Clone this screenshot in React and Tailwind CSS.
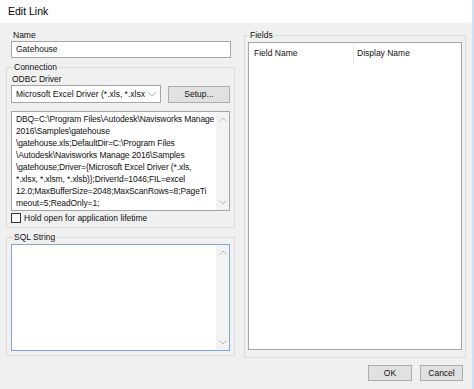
const connText = [
  'DBQ=C:\\Program Files\\Autodesk\\Navisworks Manage',
  '2016\\Samples\\gatehouse',
  '\\gatehouse.xls;DefaultDir=C:\\Program Files',
  '\\Autodesk\\Navisworks Manage 2016\\Samples',
  '\\gatehouse;Driver={Microsoft Excel Driver (*.xls,',
  '*.xlsx, *.xlsm, *.xlsb)};DriverId=1046;FIL=excel',
  '12.0;MaxBufferSize=2048;MaxScanRows=8;PageTi',
  'meout=5;ReadOnly=1;',
];

const Chevron = ({ up }) => (
  <svg width="8" height="5" viewBox="0 0 8 5" className="text-[#b8b8b8]">
    <path d={up ? 'M0.5 4.5 L4 1 L7.5 4.5' : 'M0.5 0.5 L4 4 L7.5 0.5'} fill="none" stroke="currentColor" strokeWidth="1" />
  </svg>
);

const ScrollBar = () => (
  <div className="w-[13px] bg-[#f3f3f3] flex flex-col items-center justify-between py-[5px]">
    <Chevron up />
    <Chevron />
  </div>
);

export default function App() {
  return (
    <div className="w-[474px] h-[389px] bg-[#f0f0f0] flex flex-col border-r-2 border-[#cfe2f5] font-['Liberation_Sans',Arial,sans-serif] text-[8.5px] text-[#111] overflow-hidden">
      {/* title bar */}
      <div className="h-[23px] bg-white pl-[8px] flex items-center text-[10.5px] text-black">Edit Link</div>

      <div className="h-[337px] flex pt-[6px]">
        {/* left column */}
        <div className="w-[229px] ml-[6px] flex flex-col">
          <div className="pl-[7px] leading-[12px]">Name</div>
          <div className="ml-[5px] w-[220px] h-[17px] bg-white border border-[#a5a5a5] pl-[4px] leading-[15px]">Gatehouse</div>

          {/* Connection */}
          <div className="mt-[9px] border border-[#dadada] px-[4px] pb-[3px] flex flex-col">
            <div className="-mt-[7px] ml-[2px] px-[1px] w-fit bg-[#f0f0f0] leading-[12px]">Connection</div>
            <div className="ml-[1px] leading-[12px]">ODBC Driver</div>
            <div className="flex h-[18px]">
              <div className="w-[150px] bg-white border border-[#a5a5a5] flex items-center justify-between pl-[4px] pr-[4px] whitespace-nowrap overflow-hidden">
                <span>Microsoft Excel Driver (*.xls, *.xlsx</span>
                <Chevron />
              </div>
              <div className="ml-[7px] mt-[1px] w-[62px] h-[17px] bg-[#e1e1e1] border border-[#adadad] flex items-center justify-center">Setup...</div>
            </div>
            <div className="mt-[8px] h-[100px] bg-white border border-[#a5a5a5] flex">
              <div className="flex-1 pl-[4px] pt-[1px] leading-[12px] whitespace-pre overflow-hidden tracking-[-0.12px]">
                {connText.map((line, i) => (
                  <div key={i}>{line}</div>
                ))}
              </div>
              <ScrollBar />
            </div>
            <div className="flex items-center h-[12px] mt-[1px]">
              <div className="w-[10px] h-[10px] bg-white border border-[#333]" />
              <span className="ml-[3px] leading-[12px]">Hold open for application lifetime</span>
            </div>
          </div>

          {/* SQL String */}
          <div className="mt-[9px] border border-[#dadada] px-[4px] pb-[4px] flex flex-col">
            <div className="-mt-[7px] ml-[2px] px-[1px] w-fit bg-[#f0f0f0] leading-[12px]">SQL String</div>
            <div className="mt-[1px] h-[107px] bg-white border border-[#7fa6dc] flex">
              <div className="flex-1" />
              <ScrollBar />
            </div>
          </div>
        </div>

        {/* right column */}
        <div className="ml-[9px] mt-[6px] w-[222px] h-[323px] border border-[#dadada] px-[3px] pb-[7px] flex flex-col">
          <div className="-mt-[7px] ml-[1px] px-[1px] w-fit bg-[#f0f0f0] leading-[12px]">Fields</div>
          <div className="mt-[1px] flex-1 bg-white border border-[#a5a5a5] flex flex-col">
            <div className="flex h-[21px]">
              <div className="w-[105px] pl-[5px] flex items-center border-r border-[#e8e8e8]">Field Name</div>
              <div className="pl-[3px] flex items-center">Display Name</div>
            </div>
          </div>
        </div>
      </div>

      {/* buttons */}
      <div className="flex justify-end pr-[9px] pt-[5px] gap-[8px]">
        <div className="w-[44px] h-[16px] bg-[#e1e1e1] border border-[#adadad] flex items-center justify-center">OK</div>
        <div className="w-[43px] h-[16px] bg-[#e1e1e1] border border-[#adadad] flex items-center justify-center">Cancel</div>
      </div>
    </div>
  );
}
